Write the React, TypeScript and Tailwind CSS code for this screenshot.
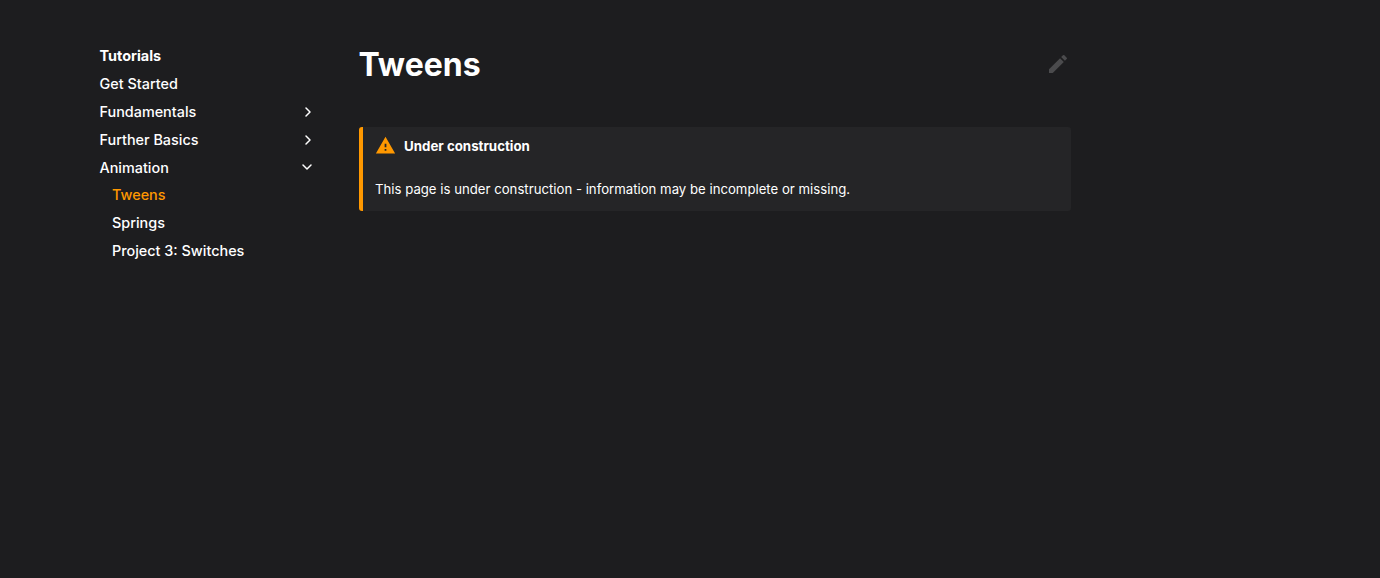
import { ChevronRight, ChevronDown } from 'lucide-react'

const font = { fontFamily: 'Inter, sans-serif' }

function NavRow({ label, open, arrow }: { label: string; open?: boolean; arrow?: boolean }) {
  return (
    <div className="flex items-center justify-between h-[27.75px] text-[14.4px] font-medium text-white">
      <span>{label}</span>
      {arrow && (open ? <ChevronDown size={16} strokeWidth={2.25} className="mr-[1px]" /> : <ChevronRight size={16} strokeWidth={2.25} />)}
    </div>
  )
}

export default function App() {
  return (
    <div style={font} className="min-h-screen bg-[#1d1d1f] flex pl-[99.5px] pt-[42px] text-white">
      <nav className="w-[216.5px] shrink-0">
        <div className="h-[27px] mb-[1.3px] flex items-center text-[14.4px] font-bold">Tutorials</div>
        <NavRow label="Get Started" />
        <NavRow label="Fundamentals" arrow />
        <NavRow label="Further Basics" arrow />
        <NavRow label="Animation" arrow open />
        <div className="pl-[12.5px]">
          <div className="h-[27.75px] flex items-center text-[14.4px] font-medium text-[#ff9800]">Tweens</div>
          <div className="h-[27.75px] flex items-center text-[14.4px] font-medium">Springs</div>
          <div className="h-[27.75px] flex items-center text-[14.4px] font-medium">Project 3: Switches</div>
        </div>
      </nav>
      <main className="ml-[42.5px] w-[712px]">
        <div className="flex items-start justify-between h-[85px]">
          <h1 className="text-[32px] leading-[44px] font-bold mt-[1px]">Tweens</h1>
          <svg className="mt-[9.5px] mr-[0.5px]" width="24" height="24" viewBox="0 0 24 24" fill="#4b4b4d">
            <path d="M3 17.25V21h3.75L17.81 9.94l-3.75-3.75L3 17.25zM20.71 7.04a1 1 0 0 0 0-1.41l-2.34-2.34a1 1 0 0 0-1.41 0l-1.83 1.83 3.75 3.75 1.83-1.83z" />
          </svg>
        </div>
        <div className="bg-[#252527] border-l-4 border-[#ff9800] rounded-[3px] h-[84px] pl-[12.5px]">
          <div className="flex items-center gap-[8px] h-[37px]">
            <svg width="21" height="21" viewBox="0 0 24 24" fill="#ff9800">
              <path d="M1 21h22L12 2 1 21zm12-3h-2v-2h2v2zm0-4h-2v-4h2v4z" />
            </svg>
            <span className="text-[13.3px] font-bold mt-[2px]">Under construction</span>
          </div>
          <p className="mt-[16px] text-[13.2px] font-normal">This page is under construction - information may be incomplete or missing.</p>
        </div>
      </main>
    </div>
  )
}
